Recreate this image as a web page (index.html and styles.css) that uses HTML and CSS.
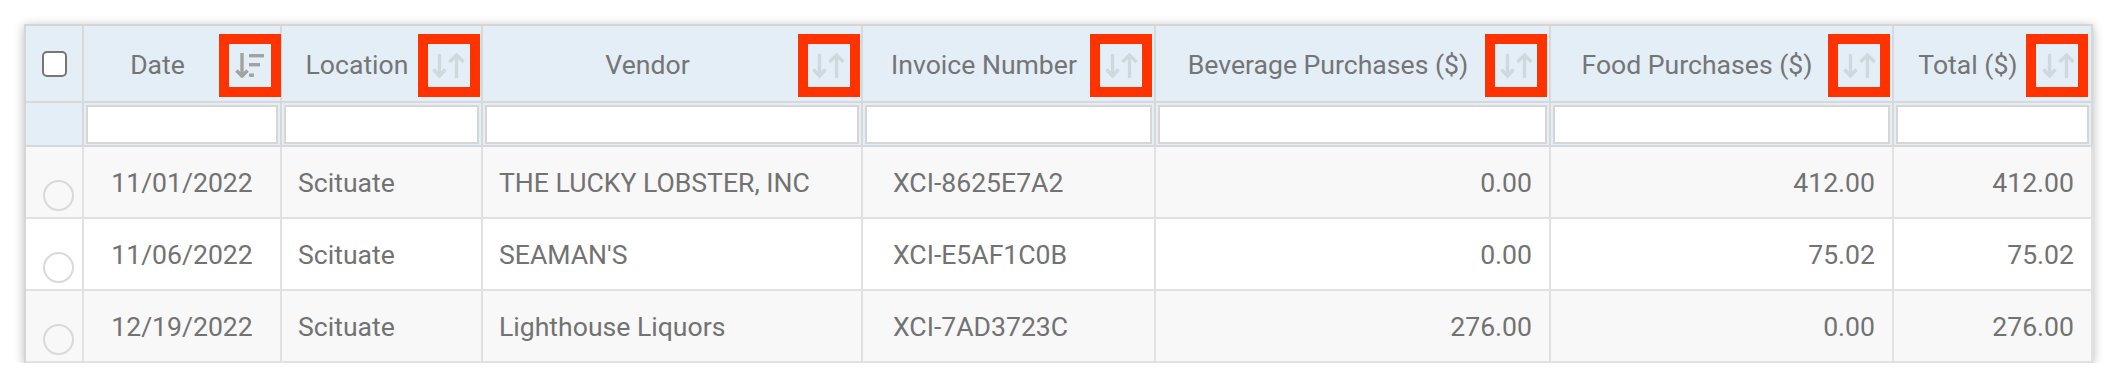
FILE: index.html
```html
<!DOCTYPE html>
<html lang="en">
<head>
<meta charset="utf-8">
<title>Invoices</title>
<link rel="stylesheet" href="styles.css">
</head>
<body>
<div class="frame">
  <div class="grid">
    <!-- header row -->
    <div class="th th-sel"><span class="checkbox"></span></div>
    <div class="th">
      <span class="label">Date</span>
      <svg class="sort" viewBox="0 0 33 25" width="33" height="25">
        <g stroke="#a2a2a2" stroke-width="3.4" fill="none" stroke-linecap="butt">
          <line x1="11" y1="0" x2="11" y2="23"/>
          <polyline points="5.5,17.5 11,23.2 16.5,17.5"/>
        </g>
        <g fill="#a2a2a2">
          <rect x="18" y="1" width="15" height="3.4"/>
          <rect x="18" y="10" width="11" height="3.4"/>
          <rect x="18" y="20.5" width="5" height="3.4"/>
        </g>
      </svg>
      <span class="mark mark-date"></span>
    </div>
    <div class="th">
      <span class="label">Location</span>
      <svg class="sort" viewBox="0 0 33 25" width="33" height="25"><g stroke="#cfd8dd" stroke-width="3.4" fill="none"><line x1="7.5" y1="1" x2="7.5" y2="23"/><polyline points="1.5,16.5 7.5,23 13.5,16.5"/><line x1="24.5" y1="2" x2="24.5" y2="25"/><polyline points="17.5,9 24.5,2 31.5,9"/></g></svg>
      <span class="mark mark-near"></span>
    </div>
    <div class="th">
      <span class="label">Vendor</span>
      <svg class="sort" viewBox="0 0 33 25" width="33" height="25"><g stroke="#cfd8dd" stroke-width="3.4" fill="none"><line x1="7.5" y1="1" x2="7.5" y2="23"/><polyline points="1.5,16.5 7.5,23 13.5,16.5"/><line x1="24.5" y1="2" x2="24.5" y2="25"/><polyline points="17.5,9 24.5,2 31.5,9"/></g></svg>
      <span class="mark mark-near"></span>
    </div>
    <div class="th">
      <span class="label">Invoice Number</span>
      <svg class="sort" viewBox="0 0 33 25" width="33" height="25"><g stroke="#cfd8dd" stroke-width="3.4" fill="none"><line x1="7.5" y1="1" x2="7.5" y2="23"/><polyline points="1.5,16.5 7.5,23 13.5,16.5"/><line x1="24.5" y1="2" x2="24.5" y2="25"/><polyline points="17.5,9 24.5,2 31.5,9"/></g></svg>
      <span class="mark"></span>
    </div>
    <div class="th">
      <span class="label">Beverage Purchases ($)</span>
      <svg class="sort" viewBox="0 0 33 25" width="33" height="25"><g stroke="#cfd8dd" stroke-width="3.4" fill="none"><line x1="7.5" y1="1" x2="7.5" y2="23"/><polyline points="1.5,16.5 7.5,23 13.5,16.5"/><line x1="24.5" y1="2" x2="24.5" y2="25"/><polyline points="17.5,9 24.5,2 31.5,9"/></g></svg>
      <span class="mark"></span>
    </div>
    <div class="th">
      <span class="label">Food Purchases ($)</span>
      <svg class="sort" viewBox="0 0 33 25" width="33" height="25"><g stroke="#cfd8dd" stroke-width="3.4" fill="none"><line x1="7.5" y1="1" x2="7.5" y2="23"/><polyline points="1.5,16.5 7.5,23 13.5,16.5"/><line x1="24.5" y1="2" x2="24.5" y2="25"/><polyline points="17.5,9 24.5,2 31.5,9"/></g></svg>
      <span class="mark"></span>
    </div>
    <div class="th">
      <span class="label">Total ($)</span>
      <svg class="sort" viewBox="0 0 33 25" width="33" height="25"><g stroke="#cfd8dd" stroke-width="3.4" fill="none"><line x1="7.5" y1="1" x2="7.5" y2="23"/><polyline points="1.5,16.5 7.5,23 13.5,16.5"/><line x1="24.5" y1="2" x2="24.5" y2="25"/><polyline points="17.5,9 24.5,2 31.5,9"/></g></svg>
      <span class="mark mark-far"></span>
    </div>

    <!-- filter row -->
    <div class="fc fc-sel"></div>
    <div class="fc"><input class="filter" type="text" aria-label="Filter Date"></div>
    <div class="fc"><input class="filter" type="text" aria-label="Filter Location"></div>
    <div class="fc"><input class="filter" type="text" aria-label="Filter Vendor"></div>
    <div class="fc"><input class="filter" type="text" aria-label="Filter Invoice Number"></div>
    <div class="fc"><input class="filter" type="text" aria-label="Filter Beverage Purchases"></div>
    <div class="fc"><input class="filter" type="text" aria-label="Filter Food Purchases"></div>
    <div class="fc"><input class="filter" type="text" aria-label="Filter Total"></div>

    <!-- row 1 -->
    <div class="td td-sel odd"><span class="radio"></span></div>
    <div class="td center odd">11/01/2022</div>
    <div class="td odd">Scituate</div>
    <div class="td odd">THE LUCKY LOBSTER, INC</div>
    <div class="td invoice odd">XCI-8625E7A2</div>
    <div class="td num odd">0.00</div>
    <div class="td num odd">412.00</div>
    <div class="td num odd">412.00</div>

    <!-- row 2 -->
    <div class="td td-sel"><span class="radio"></span></div>
    <div class="td center">11/06/2022</div>
    <div class="td">Scituate</div>
    <div class="td">SEAMAN'S</div>
    <div class="td invoice">XCI-E5AF1C0B</div>
    <div class="td num">0.00</div>
    <div class="td num">75.02</div>
    <div class="td num">75.02</div>

    <!-- row 3 -->
    <div class="td td-sel odd"><span class="radio"></span></div>
    <div class="td center odd">12/19/2022</div>
    <div class="td odd">Scituate</div>
    <div class="td odd">Lighthouse Liquors</div>
    <div class="td invoice odd">XCI-7AD3723C</div>
    <div class="td num odd">276.00</div>
    <div class="td num odd">0.00</div>
    <div class="td num odd">276.00</div>
  </div>
</div>
</body>
</html>
```

FILE: styles.css
```css
* { box-sizing: border-box; }

html, body {
  margin: 0;
  padding: 0;
  background: #ffffff;
}

body {
  font-family: Roboto, "Liberation Sans", Arial, sans-serif;
  font-size: 26.6px;
  color: #757575;
}

.frame {
  padding: 24px 0 0 24px;
}

.grid {
  display: grid;
  width: 2069px;
  grid-template-columns: 58px 198px 201px 380px 293px 395px 343px 199px;
  grid-template-rows: 77px 44px 72px 72px 72px;
  border-left: 2px solid #d6d6d6;
  border-top: 2px solid #d6d6d6;
  box-shadow: 0 2px 10px rgba(0, 0, 0, 0.28);
  background: #ffffff;
}

/* header */
.th {
  position: relative;
  display: flex;
  align-items: center;
  gap: 8px;
  padding: 0 16px 0 8px;
  background: #e3eef7;
  border-right: 2px solid #d8d8d8;
  border-bottom: 2px solid #d8d8d8;
  white-space: nowrap;
}

.th .label {
  flex: 1;
  text-align: center;
  color: #757575;
  padding-top: 2px;
}

.th .sort {
  flex: none;
  display: block;
  margin-top: 3px;
}

.th-sel {
  justify-content: center;
  padding: 0;
}

.checkbox {
  display: block;
  width: 25px;
  height: 26px;
  border: 2.5px solid #767676;
  border-radius: 5px;
  background: #ffffff;
}

/* red highlight annotation over sort icons */
.mark {
  position: absolute;
  top: 8px;
  right: 2px;
  width: 62px;
  height: 63px;
  border: 10px solid #ff3300;
  pointer-events: none;
}
.mark-date { right: -1px; }
.mark-near { right: 1px; }
.mark-far { right: 3px; }

/* filter row */
.fc {
  padding: 2px 2px 1px 2px;
  background: #e3eef7;
  border-right: 2px solid #d8d8d8;
  border-bottom: 2px solid #d8d8d8;
}

.filter {
  display: block;
  width: 100%;
  height: 39px;
  margin: 0;
  border: 2px solid #d6d6d6;
  background: #ffffff;
  font: inherit;
  outline: none;
}

/* data */
.td {
  display: flex;
  align-items: center;
  padding: 0 16px 0 16px;
  background: #ffffff;
  border-right: 2px solid #e1e1e1;
  border-bottom: 2px solid #e1e1e1;
  white-space: nowrap;
  color: #727272;
}

.td.odd { background: #f8f8f8; }

.td.center { justify-content: center; }
.td.num { justify-content: flex-end; padding-right: 17px; }
.td.invoice { padding-left: 30px; }

.td-sel {
  align-items: flex-end;
  justify-content: center;
  padding: 0 0 6px 8px;
}

.radio {
  display: block;
  width: 31px;
  height: 31px;
  border: 2px solid #d9d9d9;
  border-radius: 50%;
  background: transparent;
}
```
